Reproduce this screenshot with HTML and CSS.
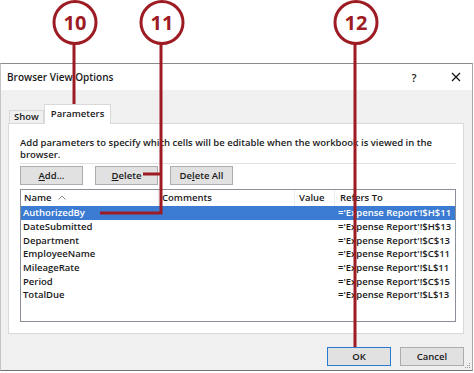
FILE: index.html
```html
<!DOCTYPE html>
<html lang="en">
<head>
    <meta charset="UTF-8">
    <title>Browser View Options</title>
    <link rel="stylesheet" href="styles.css">
</head>
<body>
    <div class="page">
        <div class="callout-space"></div>

        <div class="dialog">
            <div class="titlebar">
                <span class="title">Browser View Options</span>
                <span class="help">?</span>
                <span class="close">
                    <svg width="10" height="10" viewBox="0 0 10 10"><path d="M1 1L9 9M9 1L1 9" stroke="#111" stroke-width="1.2"/></svg>
                </span>
            </div>

            <div class="dialog-body">
                <div class="tabs">
                    <div class="tab">Show</div>
                    <div class="tab active">Parameters</div>
                </div>

                <div class="panel">
                    <p class="intro">Add parameters to specify which cells will be editable when the workbook is viewed in the browser.</p>
                    <div class="separator"></div>

                    <div class="toolbar">
                        <button class="btn"><u>A</u>dd...</button>
                        <button class="btn"><u>D</u>elete</button>
                        <button class="btn">De<u>l</u>ete All</button>
                    </div>

                    <div class="list">
                        <div class="list-head">
                            <span class="col-name">Name
                                <svg class="sort" width="8" height="5" viewBox="0 0 8 5"><path d="M0.5 4.5L4 1L7.5 4.5" fill="none" stroke="#8a8a8a" stroke-width="1"/></svg>
                            </span>
                            <span class="col-comments">Comments</span>
                            <span class="col-value">Value</span>
                            <span class="col-refers">Refers To</span>
                        </div>
                        <div class="row selected"><span class="col-name">AuthorizedBy</span><span></span><span></span><span class="col-refers">='Expense Report'!$H$11</span></div>
                        <div class="row"><span class="col-name">DateSubmitted</span><span></span><span></span><span class="col-refers">='Expense Report'!$H$13</span></div>
                        <div class="row"><span class="col-name">Department</span><span></span><span></span><span class="col-refers">='Expense Report'!$C$13</span></div>
                        <div class="row"><span class="col-name">EmployeeName</span><span></span><span></span><span class="col-refers">='Expense Report'!$C$11</span></div>
                        <div class="row"><span class="col-name">MileageRate</span><span></span><span></span><span class="col-refers">='Expense Report'!$L$11</span></div>
                        <div class="row"><span class="col-name">Period</span><span></span><span></span><span class="col-refers">='Expense Report'!$C$15</span></div>
                        <div class="row"><span class="col-name">TotalDue</span><span></span><span></span><span class="col-refers">='Expense Report'!$L$13</span></div>
                    </div>
                </div>

                <div class="footer">
                    <button class="btn default">OK</button>
                    <button class="btn">Cancel</button>
                    <svg class="grip" width="6" height="6" viewBox="0 0 6 6"><rect x="4" y="0" width="1" height="1" fill="#999"/><rect x="2" y="2" width="1" height="1" fill="#999"/><rect x="4" y="2" width="1" height="1" fill="#999"/><rect x="0" y="4" width="1" height="1" fill="#999"/><rect x="2" y="4" width="1" height="1" fill="#999"/><rect x="4" y="4" width="1" height="1" fill="#999"/></svg>
                </div>
            </div>
        </div>

        <!-- Numbered callouts drawn over the dialog -->
        <svg class="callouts" width="474" height="373" viewBox="0 0 474 373">
            <g stroke="#9d1b22" stroke-width="3" fill="none">
                <path d="M74 43V104"/>
                <path d="M161 43V213H100M161 174H143"/>
                <path d="M355 43V347"/>
                <circle cx="75" cy="22.5" r="21" fill="#fff"/>
                <circle cx="162" cy="22.5" r="21" fill="#fff"/>
                <circle cx="356" cy="22.5" r="21" fill="#fff"/>
            </g>
            <g class="callout-num" fill="#9d1b22">
                <text x="75" y="30">10</text>
                <text x="162" y="30">11</text>
                <text x="356" y="30">12</text>
            </g>
        </svg>
    </div>
</body>
</html>
```

FILE: styles.css
```css
* {
    box-sizing: border-box;
}
body {
    margin: 0;
    background-color: #fff;
    font-family: "Open Sans", "Noto Sans", sans-serif;
    font-size: 9.5px;
    font-weight: 600;
    color: #1a1a1a;
}
.page {
    position: relative;
    width: 474px;
    height: 373px;
    overflow: hidden;
}
.callout-space {
    height: 63px;
}
.dialog {
    width: 473px;
    border-top: 1px solid #8c8c8c;
    border-left: 1px solid #c4c4c4;
    border-right: 1px solid #a8a8a8;
    border-bottom: 1px solid #707070;
}
.titlebar {
    height: 26px;
    display: flex;
    align-items: center;
    padding-left: 6px;
    background-color: #fff;
}
.title {
    flex: 1;
    font-size: 10px;
}
.help {
    width: 12px;
    margin-right: 31px;
    font-size: 11px;
    text-align: center;
}
.close {
    display: flex;
    margin-right: 11px;
}
.dialog-body {
    background-color: #f0f0f0;
    padding: 14px 8px 4px 7px;
}
/* Tabs */
.tabs {
    display: flex;
    align-items: flex-end;
    height: 19px;
}
.tab {
    height: 13px;
    padding: 0 4px;
    line-height: 12px;
    border: 1px solid #d9d9d9;
    border-bottom: none;
    background-color: #f0f0f0;
    margin-left: 1px;
}
.tab.active {
    height: 20px;
    margin-bottom: -1px;
    margin-left: 0;
    padding: 3px 6px 0;
    background-color: #fff;
    border-color: #d9d9d9;
    position: relative;
}
.panel {
    height: 211px;
    border: 1px solid #d9d9d9;
    background-color: #fff;
    padding: 13px 7px 0 11px;
}
.intro {
    margin: 0;
    width: 425px;
    line-height: 12px;
}
.separator {
    margin-top: 2px;
    height: 1px;
    background-color: #e3e3e3;
}
.toolbar {
    display: flex;
    gap: 12px;
    margin-top: 2px;
}
.btn {
    width: 63px;
    height: 19px;
    padding: 0;
    font-family: inherit;
    font-size: 9.5px;
    font-weight: 600;
    color: #1a1a1a;
    background-color: #e1e1e1;
    border: 1px solid #adadad;
}
.btn u {
    text-decoration-thickness: 1px;
    text-underline-offset: 1px;
}
/* Parameter list */
.list {
    margin-top: 4px;
    height: 133px;
    border: 1px solid #8c9099;
    background-color: #fff;
}
.list-head,
.row {
    display: grid;
    grid-template-columns: 138px 136px 40px 1fr;
    align-items: center;
}
.list-head {
    height: 16px;
}
.list-head span {
    height: 16px;
    line-height: 16px;
    border-right: 1px solid #ececec;
}
.list-head span:last-child {
    border-right: none;
}
.list-head .col-name {
    padding-left: 3px;
}
.sort {
    margin-left: 4px;
    vertical-align: 1px;
}
.list-head .col-comments {
    padding-left: 3px;
}
.list-head .col-value {
    padding-left: 4px;
}
.list-head .col-refers {
    padding-left: 5px;
}
.row {
    height: 13.7px;
    line-height: 13px;
}
.row .col-name {
    padding-left: 2px;
}
.row .col-refers {
    padding-left: 3px;
    white-space: nowrap;
}
.row.selected {
    background-color: #3b7bd2;
    color: #fff;
}
/* Footer */
.footer {
    display: flex;
    justify-content: flex-end;
    align-items: flex-end;
    gap: 9px;
    margin-top: 13px;
    position: relative;
}
.footer .btn {
    width: 64px;
}
.btn.default {
    border-color: #2a7bd0;
}
.grip {
    position: absolute;
    right: -7px;
    bottom: -3px;
}
/* Callouts */
.callouts {
    position: absolute;
    left: 0;
    top: 0;
    pointer-events: none;
}
.callout-num text {
    font-family: "Open Sans", sans-serif;
    font-weight: bold;
    font-size: 20px;
    text-anchor: middle;
}
```
